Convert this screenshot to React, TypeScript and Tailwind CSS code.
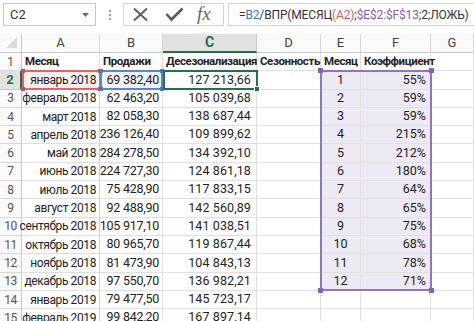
import React from "react";

const data: string[][] = [
  ["январь 2018", "69 382,40", "127 213,66", "", "1", "55%"],
  ["февраль 2018", "62 463,20", "105 039,68", "", "2", "59%"],
  ["март 2018", "82 058,30", "138 687,44", "", "3", "59%"],
  ["апрель 2018", "236 126,40", "109 899,62", "", "4", "215%"],
  ["май 2018", "284 278,50", "134 392,10", "", "5", "212%"],
  ["июнь 2018", "224 727,30", "124 861,18", "", "6", "180%"],
  ["июль 2018", "75 428,90", "117 833,15", "", "7", "64%"],
  ["август 2018", "92 488,90", "142 560,89", "", "8", "65%"],
  ["сентябрь 2018", "105 917,10", "141 038,51", "", "9", "75%"],
  ["октябрь 2018", "80 965,70", "119 867,44", "", "10", "68%"],
  ["ноябрь 2018", "81 473,90", "104 843,13", "", "11", "78%"],
  ["декабрь 2018", "97 550,70", "136 982,21", "", "12", "71%"],
  ["январь 2019", "79 477,50", "145 723,17", "", "", ""],
  ["февраль 2019", "99 842,20", "167 897,14", "", "", ""],
];

const headers = ["Месяц", "Продажи", "Десезонализация", "Сезонность", "Месяц", "Коэффициент", ""];
const cols = ["A", "B", "C", "D", "E", "F", "G"];

function Toolbar() {
  return (
    <div className="h-[34px] flex items-start pt-[3px] pl-[3px]">
      <div className="w-[93px] h-[23px] border border-[#c6c6c6] flex items-center justify-between pl-[6px] pr-[6px] text-[13px] text-[#333]">
        <span>C2</span>
        <svg width="7" height="4" viewBox="0 0 7 4">
          <polygon points="0,0 7,0 3.5,4" fill="#666" />
        </svg>
      </div>
      <div className="w-[27px] h-[23px] flex flex-col items-center justify-center gap-[2px]">
        <div className="w-[2px] h-[2px] bg-[#9a9a9a]" />
        <div className="w-[2px] h-[2px] bg-[#9a9a9a]" />
        <div className="w-[2px] h-[2px] bg-[#9a9a9a]" />
      </div>
      <div className="w-[101px] h-[23px] border border-[#d4d4d4] flex items-center">
        <svg width="17" height="15" viewBox="0 0 17 15" className="ml-[8px]">
          <line x1="2" y1="1.5" x2="15" y2="13.5" stroke="#5a5a5a" strokeWidth="1.8" />
          <line x1="15" y1="1.5" x2="2" y2="13.5" stroke="#5a5a5a" strokeWidth="1.8" />
        </svg>
        <svg width="19" height="15" viewBox="0 0 19 15" className="ml-[16px]">
          <polyline points="1.5,7 6.5,12.5 17.5,1.5" fill="none" stroke="#5a5a5a" strokeWidth="2.6" />
        </svg>
        <span className="ml-[13px] font-['Liberation_Serif',serif] italic text-[19px] leading-none text-[#666] -mt-[2px]">fx</span>
      </div>
      <div className="flex-1 h-[23px] ml-[4px] border-y border-l border-[#d4d4d4] flex items-center pl-[10px] text-[12px] whitespace-nowrap overflow-hidden text-[#333] tracking-[-0.15px]">
        <span>=</span>
        <span className="text-[#4472c4]">B2</span>
        <span>/ВПР(МЕСЯЦ</span>
        <span className="text-[#e05a5a]">(A2)</span>
        <span>;</span>
        <span className="text-[#8064a2]">$E$2:$F$13</span>
        <span>;2;ЛОЖЬ)</span>
      </div>
    </div>
  );
}

const cellText = "text-[12.5px] whitespace-nowrap";

export default function App() {
  const rowH = 18.3;
  const headH = 19;
  const rowTop = (r: number) => headH + (r - 1) * rowH;
  return (
    <div className="w-[474px] h-[321px] overflow-hidden bg-white font-[Roboto,sans-serif] text-[#222]">
      <Toolbar />
      <div
        className="relative grid"
        style={{
          gridTemplateColumns: "22px 78px 63px 94px 64px 40px 70px 43px",
          gridTemplateRows: `${headH}px repeat(15, ${rowH}px)`,
        }}
      >
        {/* corner */}
        <div className="border-r border-b border-[#c8c8c8] bg-[#fafafa] relative">
          <svg width="11" height="11" viewBox="0 0 11 11" className="absolute right-[4px] bottom-[4px]">
            <polygon points="11,0 11,11 0,11" fill="#dcdcdc" />
          </svg>
        </div>
        {cols.map((c) =>
          c === "C" ? (
            <div key={c} className="border-r border-[#c8c8c8] border-b-2 border-b-[#217346] bg-[#e1e1e1] flex items-center justify-center text-[14px] font-bold text-[#217346]">
              {c}
            </div>
          ) : (
            <div key={c} className="border-r border-b border-[#d8d8d8] border-b-[#c8c8c8] bg-[#fafafa] flex items-center justify-center text-[13px] text-[#444]">
              {c}
            </div>
          )
        )}

        {/* row 1 */}
        <div className="border-r border-b border-[#d8d8d8] border-r-[#c8c8c8] bg-[#fafafa] flex items-center justify-center text-[12px] text-[#555]">1</div>
        {headers.map((h, i) => (
          <div key={i} className="border-r border-b border-[#e0e0e0] flex items-center pl-[3px] text-[11.5px] font-bold whitespace-nowrap tracking-[-0.4px]">
            {h}
          </div>
        ))}

        {data.map((row, ri) => {
          const r = ri + 2;
          const sel = r === 2;
          const purple = r >= 2 && r <= 13;
          return (
            <React.Fragment key={r}>
              {sel ? (
                <div className="border-b border-[#c8c8c8] border-r-2 border-r-[#217346] bg-[#e1e1e1] flex items-center justify-center text-[13px] font-bold text-[#217346]">
                  {r}
                </div>
              ) : (
                <div className="border-r border-b border-[#d8d8d8] border-r-[#c8c8c8] bg-[#fafafa] flex items-center justify-center text-[12px] text-[#555] tracking-[-0.4px]">
                  {r}
                </div>
              )}
              <div className={`border-r border-b border-[#e0e0e0] border-r-[#d0d0d0] flex items-center justify-end pr-[3px] text-[12px] whitespace-nowrap tracking-[-0.4px] ${sel ? "bg-[#fcf0f0]" : ""}`}>
                {row[0]}
              </div>
              <div className={`border-r border-b border-[#e0e0e0] flex items-center justify-end pr-[3px] ${cellText} tracking-[-0.25px] ${sel ? "bg-[#f0f4fb]" : ""}`}>
                {row[1]}
              </div>
              <div className={`border-r border-b border-[#e0e0e0] flex items-center justify-end pr-[5px] ${cellText} tracking-[0.1px]`}>
                {row[2]}
              </div>
              <div className="border-r border-b border-[#e0e0e0]" />
              <div className={`border-r border-b border-[#e0e0e0] flex items-center justify-center ${cellText} ${purple ? "bg-[#eeeaf4] border-[#d9d3e3]" : ""}`}>
                {row[4]}
              </div>
              <div className={`border-r border-b border-[#e0e0e0] flex items-center justify-end pr-[4px] ${cellText} ${purple ? "bg-[#eeeaf4] border-[#d9d3e3]" : ""}`}>
                {row[5]}
              </div>
              <div className="border-r border-b border-[#e0e0e0]" />
            </React.Fragment>
          );
        })}

        {/* A2 red range */}
        <div
          className="absolute border-2 border-[#e06464] pointer-events-none"
          style={{ left: 22, top: rowTop(2) - 1, width: 79, height: rowH + 1 }}
        >
          <div className="absolute -left-[3px] -top-[3px] w-[4px] h-[4px] bg-[#d84c4c]" />
          <div className="absolute -right-[3px] -top-[3px] w-[4px] h-[4px] bg-[#d84c4c]" />
          <div className="absolute -left-[3px] -bottom-[3px] w-[4px] h-[4px] bg-[#d84c4c]" />
          <div className="absolute -right-[3px] -bottom-[3px] w-[4px] h-[4px] bg-[#d84c4c]" />
        </div>
        {/* B2 blue range */}
        <div
          className="absolute border-2 border-[#5a86d0] pointer-events-none"
          style={{ left: 100, top: rowTop(2) - 1, width: 63, height: rowH + 1 }}
        >
          <div className="absolute -left-[3px] -top-[3px] w-[4px] h-[4px] bg-[#4a76c4]" />
          <div className="absolute -right-[3px] -top-[3px] w-[4px] h-[4px] bg-[#4a76c4]" />
          <div className="absolute -left-[3px] -bottom-[3px] w-[4px] h-[4px] bg-[#4a76c4]" />
          <div className="absolute -right-[3px] -bottom-[3px] w-[4px] h-[4px] bg-[#4a76c4]" />
        </div>
        {/* C2 green selection */}
        <div
          className="absolute border-2 border-[#217346] pointer-events-none"
          style={{ left: 163, top: rowTop(2) - 1, width: 95, height: rowH + 1 }}
        >
          <div className="absolute -right-[4px] -bottom-[4px] w-[6px] h-[6px] bg-[#217346] border border-white" />
        </div>
        {/* E2:F13 purple range */}
        <div
          className="absolute border-2 border-[#8f74bf] pointer-events-none"
          style={{ left: 320, top: rowTop(2) - 1, width: 112, height: rowH * 12 + 1 }}
        >
          <div className="absolute -left-[4px] -top-[4px] w-[5px] h-[5px] bg-[#8064b8]" />
          <div className="absolute -right-[4px] -top-[4px] w-[5px] h-[5px] bg-[#8064b8]" />
          <div className="absolute -left-[4px] -bottom-[4px] w-[5px] h-[5px] bg-[#8064b8]" />
          <div className="absolute -right-[4px] -bottom-[4px] w-[5px] h-[5px] bg-[#8064b8]" />
        </div>
      </div>
    </div>
  );
}
